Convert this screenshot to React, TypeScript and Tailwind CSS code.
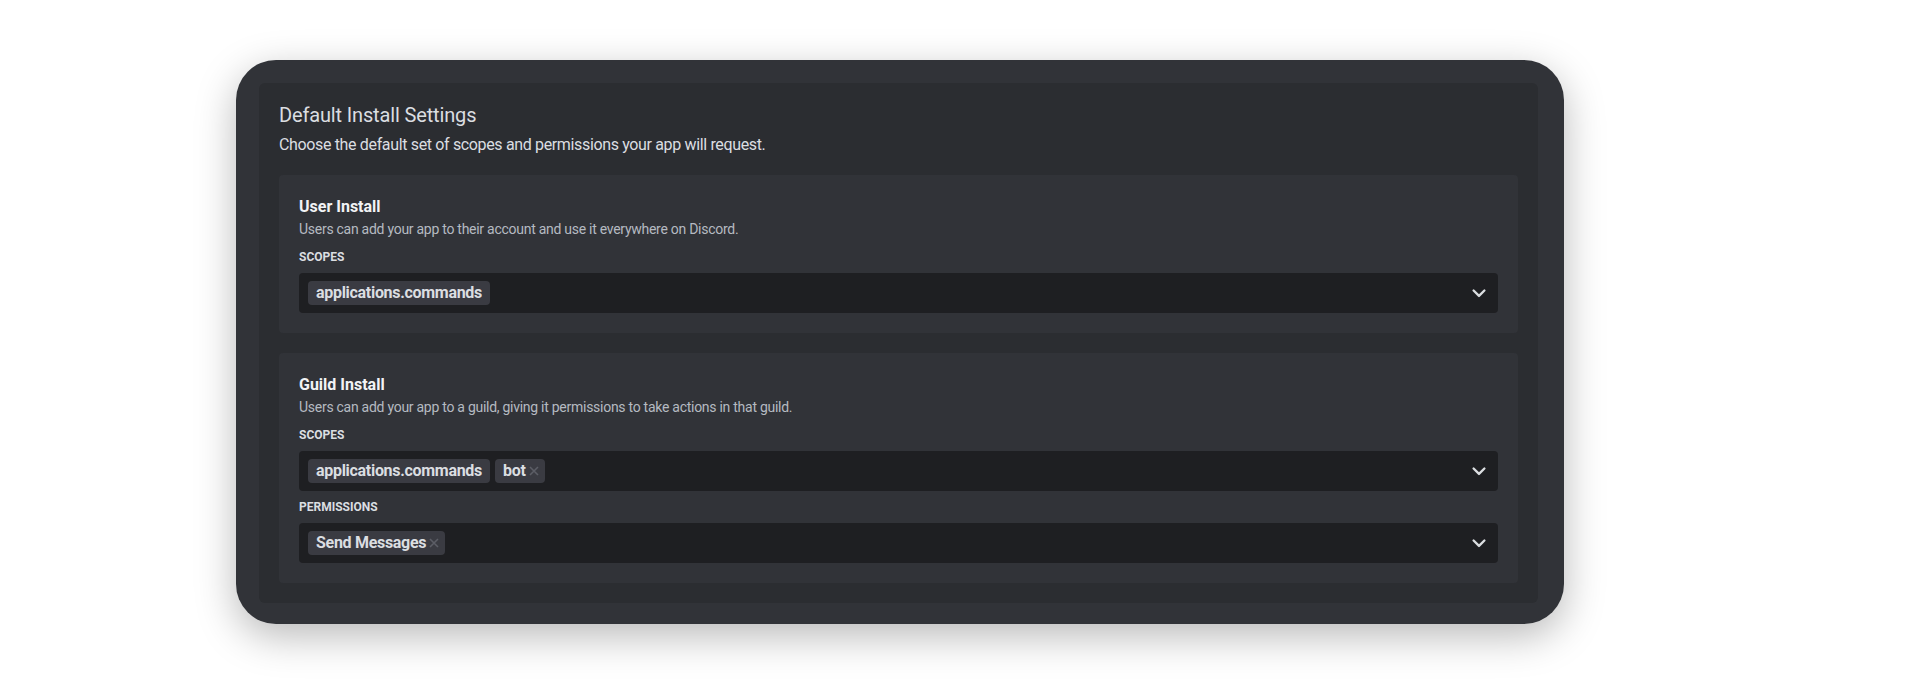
import React from "react";

type Tag = { label: string; removable?: boolean };

const ChevronDown: React.FC = () => (
  <svg width="20" height="20" viewBox="0 0 24 24" fill="none" className="shrink-0">
    <path d="M5.5 9 L12 15.5 L18.5 9" stroke="#dbdee1" strokeWidth="2.8" strokeLinecap="round" strokeLinejoin="round" />
  </svg>
);

const Chip: React.FC<Tag> = ({ label, removable }) => (
  <div
    className={`flex h-6 items-center rounded-[4px] bg-[#3a3b42] pl-2 ${removable ? "pr-[6px]" : "pr-2"}`}
  >
    <span className="text-[16px] leading-5 font-bold text-[#dbdee1] tracking-[-0.3px]">{label}</span>
    {removable && (
      <svg width="10" height="10" viewBox="0 0 10 10" className="ml-[3px]">
        <path d="M1 1 L9 9 M9 1 L1 9" stroke="#5c5e66" strokeWidth="1.6" />
      </svg>
    )}
  </div>
);

const MultiSelect: React.FC<{ tags: Tag[] }> = ({ tags }) => (
  <div className="flex h-10 items-center justify-between rounded-[4px] bg-[#1e1f22] pl-[9px] pr-[9px]">
    <div className="flex items-center gap-[5px]">
      {tags.map((t) => (
        <Chip key={t.label} {...t} />
      ))}
    </div>
    <ChevronDown />
  </div>
);

const FieldLabel: React.FC<{ children: React.ReactNode }> = ({ children }) => (
  <div className="mb-2 text-[12px] leading-4 font-bold uppercase text-[#dbdee1]">{children}</div>
);

const InstallSection: React.FC<{
  title: string;
  description: string;
  fields: { label: string; tags: Tag[] }[];
}> = ({ title, description, fields }) => (
  <div className="rounded-[4px] bg-[#313338] px-5 pt-5 pb-5">
    <div className="text-[16px] leading-6 font-bold text-[#f2f3f5]">{title}</div>
    <div className="text-[14px] leading-5 text-[#b5bac1] tracking-[-0.27px]">{description}</div>
    <div className="mt-[10px] flex flex-col gap-2">
      {fields.map((f) => (
        <div key={f.label}>
          <FieldLabel>{f.label}</FieldLabel>
          <MultiSelect tags={f.tags} />
        </div>
      ))}
    </div>
  </div>
);

export default function App() {
  return (
    <div className="min-h-screen bg-white pt-[60px] pl-[236px]" style={{ fontFamily: "Roboto, 'Noto Sans', sans-serif" }}>
      <div className="w-[1328px] rounded-[40px] bg-[#313338] p-[23px] pr-[26px] pb-[21px] shadow-[0_12px_40px_rgba(0,0,0,0.28)]">
        <div className="rounded-[6px] bg-[#2b2d31] p-5">
          <h2 className="text-[20px] leading-6 text-[#dbdee1] tracking-[-0.15px]">Default Install Settings</h2>
          <p className="mt-2 text-[16px] leading-5 text-[#dbdee1] tracking-[-0.35px]">
            Choose the default set of scopes and permissions your app will request.
          </p>

          <div className="mt-5 flex flex-col gap-5">
            <InstallSection
              title="User Install"
              description="Users can add your app to their account and use it everywhere on Discord."
              fields={[{ label: "Scopes", tags: [{ label: "applications.commands" }] }]}
            />
            <InstallSection
              title="Guild Install"
              description="Users can add your app to a guild, giving it permissions to take actions in that guild."
              fields={[
                {
                  label: "Scopes",
                  tags: [{ label: "applications.commands" }, { label: "bot", removable: true }],
                },
                { label: "Permissions", tags: [{ label: "Send Messages", removable: true }] },
              ]}
            />
          </div>
        </div>
      </div>
    </div>
  );
}
